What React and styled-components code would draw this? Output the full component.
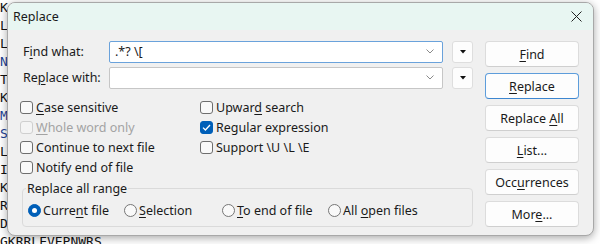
import styled, { createGlobalStyle } from 'styled-components';

const GlobalStyle = createGlobalStyle`
  body {
    margin: 0;
    background: #ffffff;
  }
`;

const uiFont = `"Segoe UI", "Noto Sans", sans-serif`;

const Screen = styled.div`
  position: relative;
  width: 600px;
  height: 244px;
  overflow: hidden;
  background: #ffffff;
`;

const EditorText = styled.div`
  display: flex;
  flex-direction: column;
  margin-top: -1px;
  font-family: "DejaVu Sans Mono", monospace;
  font-size: 13px;
  color: #111;
`;

const EditorLine = styled.div`
  height: 18px;
  line-height: 18px;
  color: ${(p) => (p.$blue ? '#1c3f94' : '#111')};
  white-space: pre;
`;

const Dialog = styled.div`
  position: absolute;
  left: 7px;
  top: 2px;
  width: 587px;
  height: 234px;
  box-sizing: border-box;
  display: flex;
  flex-direction: column;
  border: 1px solid #a8a8a8;
  border-radius: 8px;
  overflow: hidden;
  background: #f0f0f0;
  box-shadow: 0 2px 8px rgba(0, 0, 0, 0.35);
  font-family: ${uiFont};
  font-size: 12.5px;
  color: #1a1a1a;
`;

const TitleBar = styled.div`
  height: 27px;
  flex-shrink: 0;
  display: flex;
  align-items: center;
  justify-content: space-between;
  padding: 0 11px 0 5px;
  background: #e8f6f2;
`;

const CloseButton = styled.div`
  width: 12px;
  height: 12px;
  display: flex;
  align-items: center;
  justify-content: center;
`;

const Body = styled.div`
  flex: 1;
  display: flex;
  padding: 10px 14px 0 12px;
`;

const Main = styled.div`
  width: 453px;
  display: flex;
  flex-direction: column;
`;

const FieldRow = styled.div`
  display: grid;
  grid-template-columns: 80px 334px 21px;
  column-gap: 9px;
  height: 22px;
  align-items: center;
  margin-bottom: ${(p) => (p.$last ? '0' : '4px')};
`;

const FieldLabel = styled.label`
  padding-left: 3px;
  white-space: nowrap;
`;

const ComboBox = styled.div`
  height: 22px;
  box-sizing: border-box;
  display: flex;
  align-items: center;
  justify-content: space-between;
  padding: 0 8px 0 5px;
  background: #ffffff;
  border: 1px solid ${(p) => (p.$focused ? '#6aa2db' : '#c6c6c6')};
  border-radius: 2px;
`;

const DropButton = styled.div`
  height: 22px;
  box-sizing: border-box;
  display: flex;
  align-items: center;
  justify-content: center;
  background: #fdfdfd;
  border: 1px solid #dedede;
  border-radius: 3px;
  margin-top: 1px;
`;

const Options = styled.div`
  display: grid;
  grid-template-columns: 180px 1fr;
  grid-auto-rows: 20px;
  margin-top: 9px;
`;

const OptionItem = styled.label`
  display: flex;
  align-items: center;
  gap: 3px;
  white-space: nowrap;
  color: ${(p) => (p.$disabled ? '#a3a3a3' : '#1a1a1a')};
`;

const Box = styled.span`
  width: 13px;
  height: 13px;
  box-sizing: border-box;
  display: flex;
  align-items: center;
  justify-content: center;
  border-radius: 3px;
  border: 1px solid ${(p) => (p.$checked ? '#005fb8' : p.$disabled ? '#cfcfcf' : '#6e6e6e')};
  background: ${(p) => (p.$checked ? '#005fb8' : p.$disabled ? '#f4f4f4' : '#f9f9f9')};
`;

const RangeGroup = styled.fieldset`
  margin: 3px 0 0 2px;
  padding: 0 3px 6px 3px;
  width: 451px;
  box-sizing: border-box;
  border: 1px solid #dadada;
  border-radius: 4px;
  min-width: 0;
`;

const RangeLegend = styled.legend`
  padding: 0 1px;
  line-height: 17px;
`;

const RadioRow = styled.div`
  display: grid;
  grid-template-columns: 96px 98px 106px auto;
  height: 20px;
  align-items: center;
  padding-left: 2px;
  margin-top: 3px;
`;

const RadioItem = styled.label`
  display: flex;
  align-items: center;
  gap: 2px;
  white-space: nowrap;
`;

const RadioDot = styled.span`
  width: 13px;
  height: 13px;
  box-sizing: border-box;
  border-radius: 50%;
  display: flex;
  align-items: center;
  justify-content: center;
  border: 1px solid ${(p) => (p.$checked ? '#005fb8' : '#767676')};
  background: ${(p) => (p.$checked ? '#005fb8' : '#f9f9f9')};

  &::after {
    content: '';
    display: ${(p) => (p.$checked ? 'block' : 'none')};
    width: 5px;
    height: 5px;
    border-radius: 50%;
    background: #ffffff;
  }
`;

const ButtonColumn = styled.div`
  margin-left: 12px;
  margin-top: 1px;
  width: 94px;
  display: flex;
  flex-direction: column;
  gap: 6px;
`;

const DialogButton = styled.div`
  height: 26px;
  box-sizing: border-box;
  display: flex;
  align-items: center;
  justify-content: center;
  background: #fdfdfd;
  border: 1px solid ${(p) => (p.$default ? '#5d9ddb' : '#dcdcdc')};
  border-bottom-color: ${(p) => (p.$default ? '#3d86d0' : '#cfcfcf')};
  border-radius: 4px;
  white-space: nowrap;
`;

const Key = styled.u`
  text-decoration-thickness: 1px;
  text-underline-offset: 2px;
`;

const Chevron = () => (
  <svg width="8" height="5" viewBox="0 0 8 5">
    <path d="M0.5 0.5 L4 4 L7.5 0.5" fill="none" stroke="#8a8a8a" strokeWidth="1" />
  </svg>
);

const Triangle = () => (
  <svg width="6" height="4" viewBox="0 0 6 4">
    <path d="M0 0 H6 L3 3.5 Z" fill="#111" />
  </svg>
);

const CheckMark = () => (
  <svg width="9" height="7" viewBox="0 0 9 7">
    <path d="M1 3.6 L3.4 6 L8 1" fill="none" stroke="#fff" strokeWidth="1.3" />
  </svg>
);

function CheckOption({ checked, disabled, children }) {
  return (
    <OptionItem $disabled={disabled}>
      <Box $checked={checked} $disabled={disabled}>
        {checked && <CheckMark />}
      </Box>
      <span>{children}</span>
    </OptionItem>
  );
}

function RadioOption({ checked, children }) {
  return (
    <RadioItem>
      <RadioDot $checked={checked} />
      <span>{children}</span>
    </RadioItem>
  );
}

const editorLines = [
  { t: 'K' }, { t: 'L' }, { t: 'L' }, { t: 'N', blue: true }, { t: 'T' },
  { t: 'K' }, { t: 'M', blue: true }, { t: 'S', blue: true }, { t: 'L' },
  { t: 'I' }, { t: 'K' }, { t: 'R' }, { t: 'D' }, { t: 'GKRRLEVEPNWRS' },
];

export default function App() {
  return (
    <Screen>
      <GlobalStyle />
      <EditorText>
        {editorLines.map((l, i) => (
          <EditorLine key={i} $blue={l.blue}>{l.t}</EditorLine>
        ))}
      </EditorText>

      <Dialog>
        <TitleBar>
          <span>Replace</span>
          <CloseButton>
            <svg width="11" height="11" viewBox="0 0 11 11">
              <path d="M0.5 0.5 L10.5 10.5 M10.5 0.5 L0.5 10.5" stroke="#222" strokeWidth="1" />
            </svg>
          </CloseButton>
        </TitleBar>

        <Body>
          <Main>
            <FieldRow>
              <FieldLabel>F<Key>i</Key>nd what:</FieldLabel>
              <ComboBox $focused>
                <span>.*? \[</span>
                <Chevron />
              </ComboBox>
              <DropButton><Triangle /></DropButton>
            </FieldRow>
            <FieldRow $last>
              <FieldLabel>Re<Key>p</Key>lace with:</FieldLabel>
              <ComboBox>
                <span />
                <Chevron />
              </ComboBox>
              <DropButton><Triangle /></DropButton>
            </FieldRow>

            <Options>
              <CheckOption><Key>C</Key>ase sensitive</CheckOption>
              <CheckOption>Upwar<Key>d</Key> search</CheckOption>
              <CheckOption disabled><Key>W</Key>hole word only</CheckOption>
              <CheckOption checked>Regular expression</CheckOption>
              <CheckOption>Continue to next file</CheckOption>
              <CheckOption>Support \U \L \E</CheckOption>
              <CheckOption>Notify end of file</CheckOption>
            </Options>

            <RangeGroup>
              <RangeLegend>Replace all range</RangeLegend>
              <RadioRow>
                <RadioOption checked>Curre<Key>n</Key>t file</RadioOption>
                <RadioOption><Key>S</Key>election</RadioOption>
                <RadioOption><Key>T</Key>o end of file</RadioOption>
                <RadioOption>All <Key>o</Key>pen files</RadioOption>
              </RadioRow>
            </RangeGroup>
          </Main>

          <ButtonColumn>
            <DialogButton><span><Key>F</Key>ind</span></DialogButton>
            <DialogButton $default><span><Key>R</Key>eplace</span></DialogButton>
            <DialogButton><span>Replace <Key>A</Key>ll</span></DialogButton>
            <DialogButton><span><Key>L</Key>ist...</span></DialogButton>
            <DialogButton><span>Occ<Key>u</Key>rrences</span></DialogButton>
            <DialogButton><span>Mor<Key>e</Key>...</span></DialogButton>
          </ButtonColumn>
        </Body>
      </Dialog>
    </Screen>
  );
}
